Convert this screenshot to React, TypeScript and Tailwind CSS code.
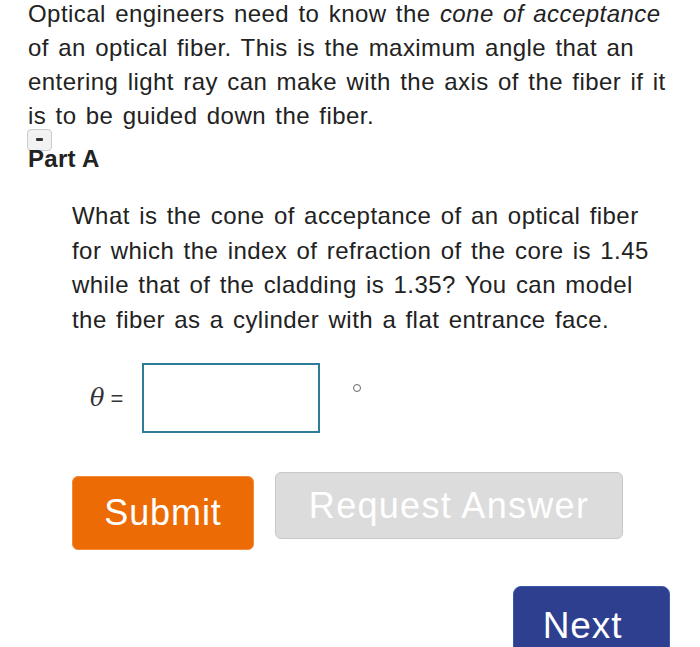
export default function App() {
  return (
    <div className="w-[700px] h-[647px] overflow-hidden bg-white text-[#222] font-['Liberation_Sans',Arial,sans-serif]">
      <p className="pl-[28px] pr-[20px] text-[24px] leading-[34px] -mt-[3px] tracking-[0.45px] [word-spacing:2.2px]">
        Optical engineers need to know the <i>cone of acceptance</i> of an optical fiber. This is the maximum angle that an
        entering light ray can make with the axis of the fiber if it is to be guided down the fiber.
      </p>
      <div className="relative pl-[28px] mt-[-4px]">
        <div className="absolute left-[27px] top-[0px] w-[25px] h-[22px] rounded-[4px] border border-[#ccc] bg-[#f2f2f2] flex items-center justify-center">
          <div className="w-[7px] h-[3px] bg-[#333] rounded-[1px] mt-[-2px]" />
        </div>
        <h2 className="relative text-[24px] font-bold leading-[34px] pt-[13px] tracking-[0.3px]">Part A</h2>
      </div>
      <div className="pl-[72px] pr-[40px] mt-[23px]">
        <p className="text-[24px] leading-[34.5px] tracking-[0.45px] [word-spacing:2.2px]">
          What is the cone of acceptance of an optical fiber for which the index of refraction of the core is 1.45 while that
          of the cladding is 1.35? You can model the fiber as a cylinder with a flat entrance face.
        </p>
        <div className="flex items-center mt-[26px] h-[70px]">
          <span className="ml-[18px] text-[24px] font-['DejaVu_Serif',serif] italic text-[#333]">θ</span>
          <span className="ml-[6px] text-[22px] text-[#333]">=</span>
          <div className="ml-[19px] w-[178px] h-[70px] border-2 border-[#2f7c98] bg-white" />
          <span className="ml-[33px] mb-[20px] w-[8px] h-[8px] rounded-full border border-[#666]" />
        </div>
        <div className="flex items-start mt-[39px] gap-[21px]">
          <button className="mt-[4px] w-[182px] h-[74px] rounded-[6px] bg-[#ec6b05] border border-[#f28a3c] text-white text-[36px] tracking-[0.9px]">
            Submit
          </button>
          <button className="w-[348px] h-[67px] rounded-[6px] bg-[#dcdcdc] border border-[#c8c8c8] text-white text-[36px] tracking-[1.3px]">
            Request Answer
          </button>
        </div>
        <div className="flex justify-end mt-[36px] mr-[-10px]">
          <button className="w-[157px] h-[70px] rounded-t-[8px] bg-[#2e3f90] border border-[#3a5aa8] text-white text-[37px] pt-[10px] pr-[18px] tracking-[0.9px]">
            Next
          </button>
        </div>
      </div>
    </div>
  );
}
